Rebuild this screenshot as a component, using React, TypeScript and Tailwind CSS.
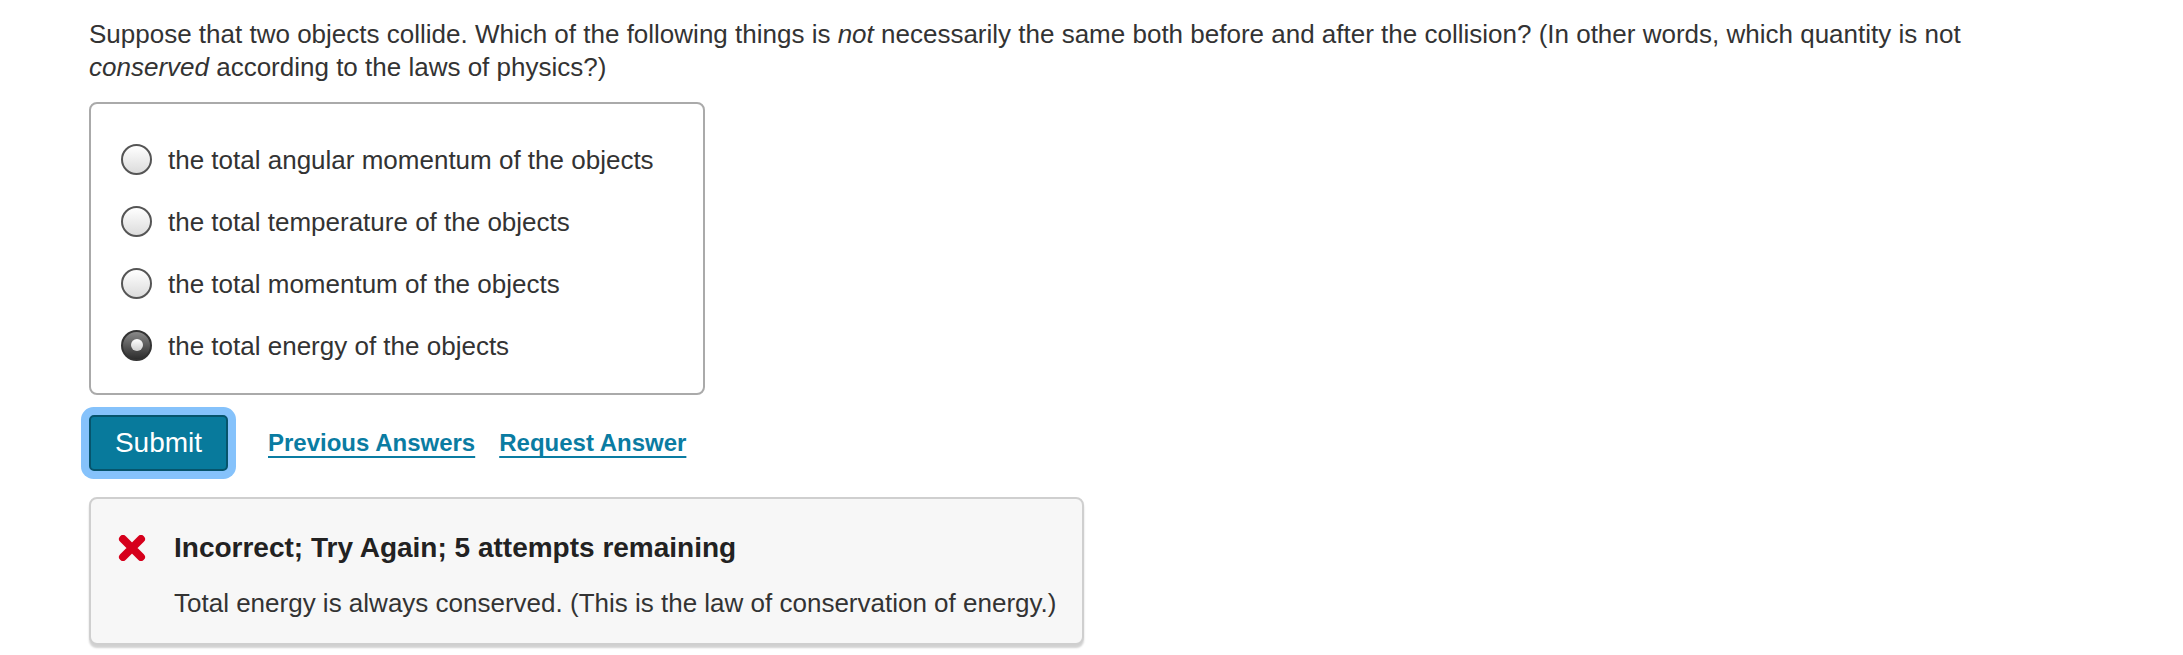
import React from "react";

const options = [
  { label: "the total angular momentum of the objects", checked: false },
  { label: "the total temperature of the objects", checked: false },
  { label: "the total momentum of the objects", checked: false },
  { label: "the total energy of the objects", checked: true },
];

function Radio({ checked }: { checked: boolean }) {
  if (checked) {
    return (
      <span className="flex h-[31px] w-[31px] shrink-0 items-center justify-center rounded-full border-2 border-[#333] bg-gradient-to-b from-[#8a8a8a] to-[#2e2e2e]">
        <span className="h-[12px] w-[12px] rounded-full bg-gradient-to-b from-white to-[#cfcfcf]" />
      </span>
    );
  }
  return (
    <span className="h-[31px] w-[31px] shrink-0 rounded-full border-2 border-[#555] bg-gradient-to-b from-white to-[#dcdcdc]" />
  );
}

function CrossIcon() {
  return (
    <svg width="28" height="26" viewBox="0 0 28 26" className="shrink-0">
      <path
        d="M5 4L23 22M23 4L5 22"
        stroke="#d6001c"
        strokeWidth="8"
        strokeLinecap="round"
        fill="none"
      />
    </svg>
  );
}

export default function App() {
  return (
    <div className="min-h-[655px] w-full bg-white pl-[89px] pt-[18px] text-[#333] font-['Liberation_Sans',Arial,sans-serif]">
      <p className="w-[1930px] text-[26px] leading-[33px]">
        Suppose that two objects collide. Which of the following things is{" "}
        <em>not</em> necessarily the same both before and after the collision?
        (In other words, which quantity is not <em>conserved</em> according to
        the laws of physics?)
      </p>

      <div className="mt-[18px] w-[616px] rounded-lg border-2 border-[#aaa] pb-[17px] pl-[30px] pt-[24px]">
        {options.map((o) => (
          <label
            key={o.label}
            className="flex h-[62px] items-center gap-[16px] text-[26px]"
          >
            <Radio checked={o.checked} />
            <span className="pt-[3px]">{o.label}</span>
          </label>
        ))}
      </div>

      <div className="mt-[20px] flex items-center">
        <button className="h-[56px] w-[139px] rounded-[5px] border-2 border-[#06546c] bg-[#087a9c] text-[28px] text-white shadow-[0_0_0_8px_#85c2fb]">
          Submit
        </button>
        <a className="ml-[40px] text-[24px] font-bold text-[#0a7ca2] underline decoration-2 underline-offset-[5px]">
          Previous Answers
        </a>
        <a className="ml-[24px] text-[24px] font-bold text-[#0a7ca2] underline decoration-2 underline-offset-[5px]">
          Request Answer
        </a>
      </div>

      <div className="mt-[26px] flex w-[995px] gap-[28px] rounded-lg border-2 border-[#cfcfcf] bg-[#f7f7f7] pb-[24px] pl-[27px] pt-[32px] shadow-[0_3px_2px_rgba(0,0,0,0.18)]">
        <div className="flex h-[34px] items-center">
          <CrossIcon />
        </div>
        <div>
          <h3 className="text-[28px] font-bold leading-[34px] text-[#222]">
            Incorrect; Try Again; 5 attempts remaining
          </h3>
          <p className="mt-[23px] text-[26px] leading-[31px] text-[#333]">
            Total energy is always conserved. (This is the law of conservation
            of energy.)
          </p>
        </div>
      </div>
    </div>
  );
}
